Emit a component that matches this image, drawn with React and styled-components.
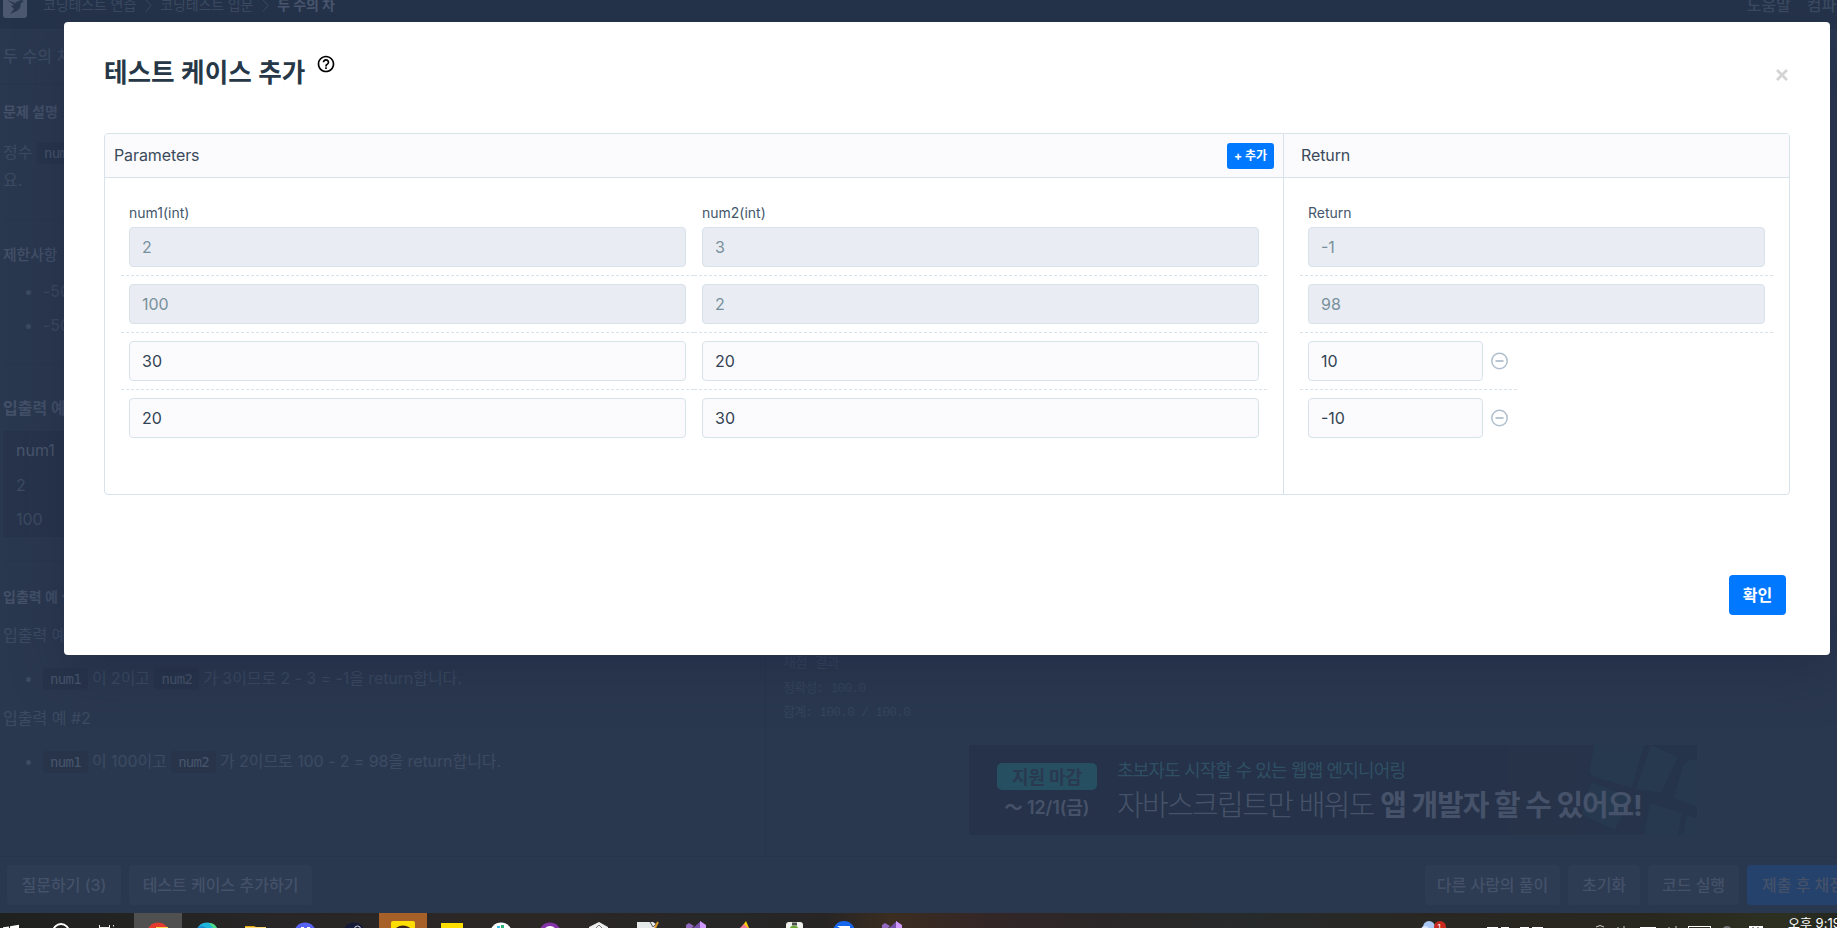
import React from 'react'
import styled, { createGlobalStyle } from 'styled-components'

const GlobalStyle = createGlobalStyle`
  * {
    box-sizing: border-box;
  }
  body {
    margin: 0;
    overflow: hidden;
    background: #2a384f;
    font-family: Inter, "Noto Sans CJK KR", sans-serif;
  }
  ul, p, h1, h5 {
    margin: 0;
    padding: 0;
  }
`

const Screen = styled.div`
  position: relative;
  width: 1837px;
  height: 928px;
  overflow: hidden;
  display: flex;
  flex-direction: column;
  color: #3c4b62;
`

const Navbar = styled.div`
  height: 29px;
  flex: none;
  display: flex;
  align-items: flex-start;
  background: #25334a;
  border-bottom: 1px solid #26344a;
  font-size: 14px;
  line-height: 20px;
`
const Logo = styled.svg`
  margin: -6px 16px 0 3px;
  flex: none;
`
const Crumb = styled.span`
  margin-top: -5px;
  white-space: nowrap;
  letter-spacing: -0.12px;
  font-weight: ${p => (p.$current ? 700 : 400)};
  color: ${p => (p.$current ? '#4b5870' : '#3d4b62')};
`
const Chevron = styled.svg`
  margin: 0 7.5px;
`
const NavRight = styled.div`
  margin: -5px -14px 0 auto;
  display: flex;
  gap: 16px;
  font-size: 16px;
  font-weight: 500;
  white-space: nowrap;
`

const ChallengeTitle = styled.div`
  height: 56px;
  flex: none;
  padding: 15px 3px 13px;
  font-size: 16px;
  line-height: 24px;
  font-weight: 500;
  letter-spacing: 0.2px;
  border-bottom: 1px solid #27354b;
`
const Content = styled.div`
  flex: 1;
  min-height: 0;
  display: flex;
`
const Guide = styled.div`
  width: 766px;
  flex: none;
  padding-left: 3px;
  border-right: 1px solid #27354b;
  font-size: 16px;
`
const GuideHead = styled.h5`
  margin-top: ${p => p.$top}px;
  height: 24px;
  line-height: 24px;
  font-size: ${p => p.$size || 14}px;
  font-weight: ${p => p.$weight || 700};
  color: #445169;
`
const GuideText = styled.p`
  margin-top: ${p => p.$top}px;
  line-height: 28px;
  height: ${p => p.$height || 28}px;
  white-space: pre;
`
const Line = styled.div`
  margin-top: ${p => p.$top}px;
  height: 1px;
  background: #28364c;
`
const Bullets = styled.ul`
  margin-top: ${p => p.$top}px;
  padding-left: 40px;
  line-height: 34px;
  letter-spacing: -0.08px;
  white-space: nowrap;
`
const Code = styled.code`
  display: inline-block;
  height: 22px;
  padding: 0 7px;
  margin-right: 4px;
  border-radius: 4px;
  background: #27344a;
  color: #48566d;
  line-height: 22px;
  font-size: 14px;
  letter-spacing: -0.7px;
  font-family: "DejaVu Sans Mono", monospace;
`
const SampleTable = styled.div`
  margin-top: 11px;
  width: 180px;
  height: 106px;
  background: #27344b;
  border: 1px solid #26334a;
`
const SampleRow = styled.div`
  height: ${p => (p.$head ? 36 : 34)}px;
  padding-left: 12px;
  line-height: ${p => (p.$head ? 36 : 34)}px;
  color: ${p => (p.$head ? '#4a576d' : '#3c4b62')};
  border-bottom: ${p => (p.$head ? '1px solid #26344a' : 0)};
`

const Result = styled.div`
  flex: 1;
  padding: 566px 0 0 17px;
  font-family: "Liberation Mono", "Noto Sans CJK KR", monospace;
  font-size: 13px;
  color: #35455d;
`
const ResultLine = styled.p`
  height: ${p => (p.$title ? 26 : 24)}px;
  line-height: 24px;
  font-size: ${p => (p.$title ? 14 : 13)}px;
  letter-spacing: -0.8px;
  white-space: pre;
`
const Banner = styled.div`
  position: relative;
  margin: 20px 0 0 186px;
  width: 728px;
  height: 90px;
  background: #263249;
  display: flex;
  font-family: Inter, "Noto Sans CJK KR", sans-serif;
`
const BannerArt = styled.svg`
  position: absolute;
  right: 0;
  top: 0;
`
const Deadline = styled.div`
  width: 100px;
  margin: 18px 0 0 28px;
  text-align: center;
  color: #465269;
  font-size: 18px;
  font-weight: 600;
  line-height: 36px;
  letter-spacing: -0.1px;
  white-space: nowrap;
`
const DeadlineTag = styled.div`
  height: 27px;
  line-height: 29px;
  border-radius: 5px;
  background: #264f61;
  color: #2a3950;
  font-weight: 700;
`
const BannerCopy = styled.div`
  position: relative;
  z-index: 1;
  margin: 12px 0 0 20px;
  white-space: nowrap;
`
const BannerSmall = styled.div`
  font-size: 18px;
  line-height: 28px;
  letter-spacing: -0.85px;
  color: #2f5064;
`
const BannerBig = styled.div`
  font-size: 29px;
  line-height: 42px;
  font-weight: 300;
  letter-spacing: -1.65px;
  color: #465269;
  b {
    font-weight: 700;
    letter-spacing: -1.15px;
  }
`

const ActionBar = styled.div`
  height: 57px;
  flex: none;
  display: flex;
  gap: 8px;
  padding: 8px 0 0 7px;
  border-top: 1px solid #27354b;
`
const ActionButton = styled.button`
  width: ${p => p.$width}px;
  height: 40px;
  flex: none;
  padding: 0 0 2px;
  border: 0;
  border-radius: 4px;
  margin-left: ${p => (p.$push ? 'auto' : 0)};
  margin-right: ${p => (p.$primary ? '-22px' : 0)};
  background: ${p => (p.$primary ? '#24426b' : '#2d3c53')};
  color: #445169;
  font-family: inherit;
  font-size: 16px;
  font-weight: 500;
  white-space: nowrap;
`

const Taskbar = styled.div`
  height: 15px;
  flex: none;
  overflow: hidden;
  background: linear-gradient(90deg, #1f211f 0, #282626 15%, #2b2725 28%, #272727 40%, #272524 45%, #3b2d20 48.5%, #332627 54%, #2b2728 60%, #272a2b 68%, #292722 78%, #29281f 90%, #2d3021 97%, #24271f 100%);
  svg {
    display: block;
  }
  text {
    font-family: Inter, "Noto Sans CJK KR", sans-serif;
  }
`

const Dialog = styled.div`
  position: absolute;
  left: 64px;
  top: 22px;
  width: 1766px;
  height: 633px;
  padding: 0 40px;
  border-radius: 4px;
  background: #fff;
  color: #263747;
  box-shadow: 0 16px 48px rgba(30, 38, 65, 0.5);
`
const DialogHead = styled.div`
  height: 111px;
  padding-top: 32px;
  display: flex;
  align-items: flex-start;
`
const DialogTitle = styled.h1`
  font-size: 25.6px;
  line-height: 38px;
  font-weight: 600;
  white-space: nowrap;
`
const HelpIcon = styled.svg`
  margin: 0 0 0 11px;
`
const CloseIcon = styled.svg`
  margin: 14px 1px 0 auto;
`
const Table = styled.div`
  height: 362px;
  display: flex;
  border: 1px solid #d7e2eb;
  border-radius: 4px;
  overflow: hidden;
`
const Column = styled.div`
  width: ${p => (p.$width ? p.$width + 'px' : 'auto')};
  flex: ${p => (p.$width ? 'none' : 1)};
  border-left: ${p => (p.$divided ? '1px solid #d7e2eb' : 0)};
`
const ColumnHead = styled.div`
  height: 44px;
  padding: 0 9px 0 ${p => p.$left}px;
  display: flex;
  align-items: center;
  justify-content: space-between;
  background: #fbfbfd;
  border-bottom: 1px solid #d7e2eb;
  font-size: 16px;
  letter-spacing: -0.1px;
  color: #3a4a5a;
`
const HeadText = styled.span`
  padding-bottom: 2px;
`
const AddButton = styled.button`
  width: 47px;
  height: 26px;
  padding: 0 0 3px;
  border: 0;
  border-radius: 3px;
  background: #0078ff;
  color: #fff;
  font-family: inherit;
  font-size: 12px;
  font-weight: 700;
  white-space: nowrap;
`
const ColumnBody = styled.div`
  padding: 24px 16px 0;
`
const Labels = styled.div`
  display: flex;
  height: 17px;
  line-height: 22px;
  font-size: 14px;
  color: #44576c;
`
const Label = styled.div`
  flex: 1;
  padding-left: 8px;
`
const Row = styled.div`
  height: 57px;
  width: ${p => (p.$short ? '217px' : '100%')};
  display: flex;
`
const Cell = styled.div`
  flex: 1;
  display: flex;
  align-items: center;
  gap: 8px;
  padding: 0 8px;
  border-bottom: ${p => (p.$last ? '1px solid transparent' : '1px dashed #d7e2eb')};
`
const Input = styled.input`
  width: ${p => (p.$short ? '175px' : '100%')};
  height: 40px;
  padding: 0 12px;
  border: 1px solid #d7e2eb;
  border-radius: 4px;
  outline: 0;
  background: #fbfbfd;
  color: #334353;
  font-family: inherit;
  font-size: 16px;
  &:disabled {
    background: #e9ecf3;
    color: #78909c;
  }
`
const DialogFoot = styled.div`
  display: flex;
  justify-content: flex-end;
  padding: 80px 4px 0 0;
`
const ConfirmButton = styled.button`
  width: 57px;
  height: 40px;
  padding: 0 0 2px;
  border: 0;
  border-radius: 4px;
  background: #0078ff;
  color: #fff;
  font-family: inherit;
  font-size: 16px;
  font-weight: 600;
`
const MinusIcon = styled.svg`
  flex: none;
`

const cases = [
  { num1: '2', num2: '3', result: '-1', disabled: true },
  { num1: '100', num2: '2', result: '98', disabled: true },
  { num1: '30', num2: '20', result: '10' },
  { num1: '20', num2: '30', result: '-10' },
]

const Separator = () => (
  <Chevron width="9" height="14" viewBox="0 0 9 14" fill="none" stroke="#3d4b62">
    <path d="M2 0l5 5.500-5 6" />
  </Chevron>
)

const RemoveIcon = () => (
  <MinusIcon width="18" height="18" viewBox="0 0 18 18" fill="none" stroke="#b0bfce" strokeWidth="1.500">
    <circle cx="8.500" cy="9" r="7.700" />
    <path d="M4.500 9h8" strokeWidth="1.800" />
  </MinusIcon>
)

const VisualStudio = ({ x }) => (
  <g transform={`translate(${x} 8)`}>
    <path d="M0 7V4l3-2 5 3-2 2z" fill="#9068bd" />
    <path d="M7 7l8-7v7z" fill="#7650a8" />
    <path d="M14 0l6 4v3h-6z" fill="#cf98ff" />
  </g>
)

const TaskbarIcons = () => (
  <svg width="1837" height="15" viewBox="0 0 1837 15">
    {/* start, search, task view */}
    <path d="M3 14.200l6-.8V15H3zM10 13.200l9-1.400V15h-9z" fill="#fff" />
    <circle cx="61" cy="19" r="8" fill="none" stroke="#fff" strokeWidth="2" />
    <path d="M99.500 12v3M99 14.500h11M109.500 12v3M113.500 12v1.500" stroke="#eee" fill="none" />

    {/* chrome */}
    <rect x="134" width="48" height="15" fill="#505050" />
    <circle cx="158" cy="20.500" r="11" fill="#e33b2e" />
    <path d="M156 14h12v1h-12z" fill="#ffd34d" />
    {/* edge */}
    <circle cx="207" cy="20.500" r="11" fill="#20b6db" />
    <path d="M209 10c5 0 7 3 8 5h-4z" fill="#50d986" />
    <path d="M198 14l4-1 5 2h-9z" fill="#1688cf" />
    {/* explorer */}
    <path d="M245 13h9l2 1h10v1h-21z" fill="#e9a908" />
    <path d="M255 14h11v1h-21v-1h9z" fill="#ffda79" />
    {/* discord */}
    <circle cx="305" cy="20.500" r="11" fill="#5562f5" />
    <path d="M301 14.500h3M307 14.500h3" stroke="#fff" />
    {/* steam */}
    <circle cx="354" cy="20.500" r="11" fill="#141a38" />
    <circle cx="357.500" cy="16" r="3" fill="none" stroke="#ddd" />
    {/* kakaotalk */}
    <rect x="379" width="48" height="15" fill="#a86029" />
    <rect x="391" y="8" width="24" height="12" rx="2" fill="#fede00" />
    <ellipse cx="403" cy="19" rx="9" ry="6.500" fill="#3b241b" />
    <path d="M441 10h22v5h-22z" fill="#fede00" />
    {/* slack */}
    <circle cx="501" cy="20.500" r="11" fill="#fff" />
    <path d="M497 13h3v2h-3z" fill="#35bdea" />
    <path d="M501 12h3v3h-3z" fill="#2bb37a" />
    <circle cx="550" cy="20.500" r="11" fill="#8434a8" />
    <circle cx="550" cy="20" r="7" fill="#fff" />
    {/* unity */}
    <path d="M589 14l10-5 9 5v1h-19z" fill="#eee" />
    <path d="M596 15l3-3 3 3" fill="none" stroke="#777" />

    <path d="M637 9h16l3 2v4h-19z" fill="#e5e9ea" />
    <path d="M650 9l3 5 4-4" fill="none" stroke="#555" />
    <path d="M655 15l3-6" stroke="#d79625" strokeWidth="2" />
    <VisualStudio x={686} />
    <path d="M741 15l5-7 3 7z" fill="#ffd000" />
    <path d="M740 15l4-4 4 4z" fill="#ef7b97" />
    <rect x="786" y="9" width="17" height="8" rx="3" fill="#f0f3ed" />
    <path d="M792 9.500h5v3h-5z" fill="#4b5048" />
    <path d="M790 15c0-3 8-3 8 0z" fill="#67a932" />
    <circle cx="844" cy="19" r="11" fill="#1667ed" />
    <path d="M837 13h13v2h-10z" fill="#fff" />
    <VisualStudio x={882} />

    {/* weather with its badge */}
    <circle cx="1429" cy="14" r="6" fill="#a9c9f4" />
    <circle cx="1425" cy="17" r="4" fill="#d9e8ff" />
    <circle cx="1440" cy="14" r="6" fill="#c92a20" />
    <text x="1437.500" y="17" fontSize="8" fill="#fff">1</text>
    {/* tray */}
    <path d="M1487 14.500h11M1501 14.500h8M1520 14.500h9M1532 14.500h11M1640 14.500h16" stroke="#fff" />
    <path d="M1596 14q4-3 8 0M1618 14v1M1624 13v2M1669 14v1M1676 13v2" fill="none" stroke="#ccc" />
    <rect x="1688.500" y="13.500" width="22" height="5" fill="none" stroke="#fff" />
    <circle cx="1727" cy="18" r="5" fill="#777" />
    <path d="M1749 13h14v2h-14z" fill="#fff" />
    <path d="M1753 14v1M1758 14v1" stroke="#222" />
    <text x="1788" y="15" fontSize="13" fill="#fff">오후 9:19</text>
  </svg>
)

const AddCaseDialog = () => (
  <Dialog>
    <DialogHead>
      <DialogTitle>테스트 케이스 추가</DialogTitle>
      <HelpIcon width="20" height="20" viewBox="0 0 24 24">
        <path d="M11 18h2v-2h-2v2zm1-16C6.480 2 2 6.480 2 12s4.480 10 10 10 10-4.480 10-10S17.520 2 12 2zm0 18c-4.410 0-8-3.590-8-8s3.590-8 8-8 8 3.590 8 8-3.590 8-8 8zm0-14c-2.210 0-4 1.790-4 4h2c0-1.100.9-2 2-2s2 .9 2 2c0 2-3 1.750-3 5h2c0-2.250 3-2.500 3-5 0-2.210-1.790-4-4-4z" />
      </HelpIcon>
      <CloseIcon width="14" height="14" viewBox="0 0 14 14" stroke="#d4d4d4" strokeWidth="2.800">
        <path d="M2 2l10 10M12 2L2 12" />
      </CloseIcon>
    </DialogHead>
    <Table>
      <Column $width={1178}>
        <ColumnHead $left={9}>
          <HeadText>Parameters</HeadText>
          <AddButton>+ 추가</AddButton>
        </ColumnHead>
        <ColumnBody>
          <Labels>
            <Label>num1(int)</Label>
            <Label>num2(int)</Label>
          </Labels>
          {cases.map((c, i) => (
            <Row key={i}>
              <Cell $last={i === cases.length - 1}>
                <Input defaultValue={c.num1} disabled={c.disabled} />
              </Cell>
              <Cell $last={i === cases.length - 1}>
                <Input defaultValue={c.num2} disabled={c.disabled} />
              </Cell>
            </Row>
          ))}
        </ColumnBody>
      </Column>
      <Column $divided>
        <ColumnHead $left={17}>
          <HeadText>Return</HeadText>
        </ColumnHead>
        <ColumnBody>
          <Labels>
            <Label>Return</Label>
          </Labels>
          {cases.map((c, i) => (
            <Row key={i} $short={!c.disabled}>
              <Cell $last={i === cases.length - 1}>
                <Input defaultValue={c.result} disabled={c.disabled} $short={!c.disabled} />
                {!c.disabled && <RemoveIcon />}
              </Cell>
            </Row>
          ))}
        </ColumnBody>
      </Column>
    </Table>
    <DialogFoot>
      <ConfirmButton>확인</ConfirmButton>
    </DialogFoot>
  </Dialog>
)

const App = () => {
  return (
    <Screen>
      <GlobalStyle />
      <Navbar>
        <Logo width="24" height="24" viewBox="0 0 24 24">
          <rect width="24" height="24" rx="3" fill="#4b5870" />
          <path d="M4 6l8 3 3-2 3-1 3 1-3 2-1 5-3 3-7 3 4-5-3-3 3-1z" fill="#293850" />
        </Logo>
        <Crumb>코딩테스트 연습</Crumb>
        <Separator />
        <Crumb>코딩테스트 입문</Crumb>
        <Separator />
        <Crumb $current>두 수의 차</Crumb>
        <NavRight>
          <span>도움말</span>
          <span>컴파일</span>
        </NavRight>
      </Navbar>
      <ChallengeTitle>두 수의 차</ChallengeTitle>

      <Content>
        <Guide>
          <GuideHead $top={15}>문제 설명</GuideHead>
          <GuideText $top={14} $height={57}>정수 <Code>num1</Code>{'\n'}요.</GuideText>
          <Line $top={25} />
          <GuideHead $top={22} $weight={500} $size={14.8}>제한사항</GuideHead>
          <Bullets $top={7}>
            <li>-50</li>
            <li>-50</li>
          </Bullets>
          <Line $top={21} />
          <GuideHead $top={32} $size={16}>입출력 예</GuideHead>
          <SampleTable>
            <SampleRow $head>num1</SampleRow>
            <SampleRow>2</SampleRow>
            <SampleRow>100</SampleRow>
          </SampleTable>
          <Line $top={23} />
          <GuideHead $top={24}>입출력 예 설명</GuideHead>
          <GuideText $top={12}>입출력 예 #1</GuideText>
          <Bullets $top={12}>
            <li><Code>num1</Code>이 2이고 <Code>num2</Code>가 3이므로 2 - 3 = -1을 return합니다.</li>
          </Bullets>
          <GuideText $top={9}>입출력 예 #2</GuideText>
          <Bullets $top={12}>
            <li><Code>num1</Code>이 100이고 <Code>num2</Code>가 2이므로 100 - 2 = 98을 return합니다.</li>
          </Bullets>
        </Guide>
        <Result>
          <ResultLine $title>채점 결과</ResultLine>
          <ResultLine>정확성: 100.0</ResultLine>
          <ResultLine>합계: 100.0 / 100.0</ResultLine>
          <Banner>
            <BannerArt width="190" height="90" viewBox="0 0 190 90">
              <defs>
                <linearGradient id="glow">
                  <stop offset="0" stopColor="#263348" />
                  <stop offset="0.3" stopColor="#263349" />
                  <stop offset="1" stopColor="#26344b" />
                </linearGradient>
              </defs>
              <rect width="190" height="90" fill="url(#glow)" />
              <g fill="#27394f">
                <path d="M87 0h50l-12 43-37-11q-7-3-5-8z" />
                <path d="M144 0l27 12-17 36-25-4z" />
                <path d="M190 15q-11-2-15 8l-8 30 23 9z" />
                <path d="M84 37l40 15-16 33-33-15z" />
                <path d="M143 58l32 10-4 22h-34z" />
                <path d="M180 70l10 3v17h-14z" />
              </g>
            </BannerArt>
            <Deadline>
              <DeadlineTag>지원 마감</DeadlineTag>
              ～ 12/1(금)
            </Deadline>
            <BannerCopy>
              <BannerSmall>초보자도 시작할 수 있는 웹앱 엔지니어링</BannerSmall>
              <BannerBig>자바스크립트만 배워도 <b>앱 개발자 할 수 있어요!</b></BannerBig>
            </BannerCopy>
          </Banner>
        </Result>
      </Content>

      <ActionBar>
        <ActionButton $width={114}>질문하기 (3)</ActionButton>
        <ActionButton $width={183}>테스트 케이스 추가하기</ActionButton>
        <ActionButton $width={135} $push>다른 사람의 풀이</ActionButton>
        <ActionButton $width={72}>초기화</ActionButton>
        <ActionButton $width={91}>코드 실행</ActionButton>
        <ActionButton $width={112} $primary>제출 후 채점</ActionButton>
      </ActionBar>
      <Taskbar>
        <TaskbarIcons />
      </Taskbar>

      <AddCaseDialog />
    </Screen>
  )
}

export default App
